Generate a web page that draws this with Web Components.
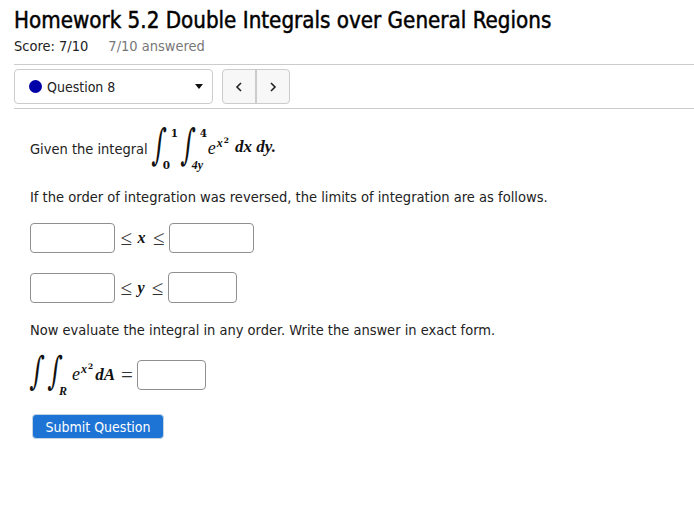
<!DOCTYPE html>
<html lang="en"><head><meta charset="utf-8"><title>Homework</title>
<style>
html,body{margin:0;padding:0;background:#fff}
body{font-family:"DejaVu Sans",sans-serif;color:#1a1a1a}
</style></head><body>
<hw-page>
  <hw-header title-text="Homework 5.2 Double Integrals over General Regions" score="Score: 7/10" answered="7/10 answered"></hw-header>
  <hw-nav label="Question 8"></hw-nav>
  <hw-question></hw-question>
</hw-page>
<script>
const UI='font-family:"DejaVu Sans",sans-serif;font-stretch:condensed;';
function def(name, html){
  customElements.define(name, class extends HTMLElement{
    connectedCallback(){
      if(this.shadowRoot) return;
      const r=this.attachShadow({mode:'open'});
      r.innerHTML=typeof html==='function'?html(this):html;
    }
  });
}
def('hw-page',`<style>:host{display:block;width:680px;padding:0 0 0 14px}</style><slot></slot>`);
def('hw-header',e=>`<style>
:host{display:block;border-bottom:1px solid #ccc;height:65px;box-sizing:border-box}
h1{margin:0;padding-top:5px;${UI}font-weight:400;font-size:22.2px;line-height:30px;color:#000;white-space:nowrap;-webkit-text-stroke:.45px #000}
p{margin:0;padding-top:1px;${UI}font-size:14.5px;line-height:20px;color:#222;display:flex;gap:20px}
span{color:#777}
</style><h1>${e.getAttribute('title-text')}</h1><p>${e.getAttribute('score')}<span>${e.getAttribute('answered')}</span></p>`);
def('hw-nav',e=>`<style>
:host{display:flex;height:44px;box-sizing:border-box;border-bottom:1px solid #ccc;padding-top:4px;gap:9px;align-items:flex-start}
.sel{width:199px;height:35px;box-sizing:border-box;border:1px solid #ccc;border-radius:4px;display:flex;align-items:center;padding:0 9px 0 14px;${UI}font-size:14px;color:#222}
.dot{width:13px;height:13px;border-radius:50%;background:#0000a8;margin-right:5px;flex:none}
.lab{flex:1}
.car{width:0;height:0;border:4px solid transparent;border-top:5px solid #111;border-bottom:0}
.grp{display:flex;width:68px;height:35px;box-sizing:border-box;border:1px solid #ccc;border-radius:4px;background:#f7f7f7}
.b{flex:1;display:flex;align-items:center;justify-content:center}
.b+.b{border-left:2px solid #ccc}
svg{width:8px;height:10px;fill:none;stroke:#222;stroke-width:1.6}
</style><div class="sel"><span class="dot"></span><span class="lab">${e.getAttribute('label')}</span><span class="car"></span></div>
<div class="grp"><div class="b"><svg viewBox="0 0 8 10"><path d="M6 1 2 5l4 4"/></svg></div><div class="b"><svg viewBox="0 0 8 10"><path d="M2 1l4 4-4 4"/></svg></div></div>`);
def('hw-input',e=>`<style>:host{display:inline-block;width:${e.getAttribute('w')||85}px;height:${e.getAttribute('h')||30}px;box-sizing:border-box;border:1px solid #8f8f8f;border-radius:4px;background:#fff;flex:none}</style>`);
def('hw-int',e=>`<style>
:host{display:inline-flex;align-items:center;height:${e.getAttribute('h')||46}px;flex:none;width:${e.getAttribute('w')||29}px}
.s{display:inline-block;width:10px;font:40px/46px "DejaVu Serif",serif;color:#111;transform:translate(-1px,-5px) scale(.6,${e.getAttribute('sy')||1.06}) skewX(-9deg);flex:none}
.l{display:flex;flex-direction:column;justify-content:space-between;height:44px;font:700 10.5px/12px "DejaVu Serif",serif;color:#111}
.u{margin-left:9px}.d{margin-left:1px}
i{font:italic 700 12px/12px "Liberation Serif",serif}
</style><span class="s">∫</span><span class="l"><span class="u">${e.getAttribute('up')||'&nbsp;'}</span><span class="d">${e.getAttribute('down')||'&nbsp;'}</span></span>`);
def('hw-exp',`<style>
:host{display:inline-flex;align-items:flex-start;font:italic 18px/20px "Liberation Serif",serif;color:#111;height:24px;flex:none}
.e{padding-top:1px}
.x{font:italic 700 12px/12px "Liberation Serif",serif;margin-left:1px}
sup{font:700 7.5px/8px "DejaVu Serif",serif;vertical-align:top;margin-left:1px}
</style><span class="e">e</span><span class="x">x<sup>2</sup></span>`);
def('hw-question',`<style>
:host{display:block;padding:14px 0 0 16px;${UI}font-size:14.5px;line-height:20px;color:#222}
.row{display:flex;align-items:center}
.m{font:italic 700 16px/20px "Liberation Serif",serif;color:#111;white-space:nowrap}
.le{font:21px/20px "Liberation Serif",serif;color:#333;flex:none}
p{margin:0}
.given{height:52px}
.dxdy{font:italic 700 17px/20px "Liberation Serif",serif;margin-left:6px;color:#111;transform:translateY(-2px)}
.p1{padding-top:12px;font-size:14.55px}
.r1{margin-top:16px;height:30px}
.r2{margin-top:19px;height:31px}
.p2{padding-top:17px}
.r3{margin-top:10px;height:50px}
.da{font:italic 700 17px/20px "Liberation Serif",serif;color:#111;margin-left:2px}
.btn{display:inline-flex;align-items:center;justify-content:center;margin:14px 0 0 2px;width:132px;height:25px;box-sizing:border-box;border:1px solid #c4d4e4;border-radius:4px;background:#1d74d4;color:#fff;font-size:14px}
</style>
<div class="row given"><span style="margin-right:4px">Given the integral</span><hw-int up="1" down="0"></hw-int><hw-int up="4" down="<i>4y</i>" w="27"></hw-int><hw-exp></hw-exp><span class="dxdy">dx dy.</span></div>
<p class="p1">If the order of integration was reversed, the limits of integration are as follows.</p>
<div class="row r1"><hw-input></hw-input><span class="le" style="margin:0 5.5px">≤</span><span class="m">x</span><span class="le" style="margin:0 4px 0 7.5px">≤</span><hw-input></hw-input></div>
<div class="row r2"><hw-input></hw-input><span class="le" style="margin:0 5.5px">≤</span><span class="m">y</span><span class="le" style="margin:0 4.5px 0 7px">≤</span><hw-input w="69" h="31"></hw-input></div>
<p class="p2">Now evaluate the integral in any order. Write the answer in exact form.</p>
<div class="row r3"><hw-int w="18" sy=".97"></hw-int><hw-int down="<i>R</i>" w="24" sy=".97"></hw-int><hw-exp></hw-exp><span class="da">dA</span><span class="le" style="margin:0 4px 0 6px">=</span><hw-input w="69"></hw-input></div>
<div class="btn">Submit Question</div>`);
</script>
</body></html>
